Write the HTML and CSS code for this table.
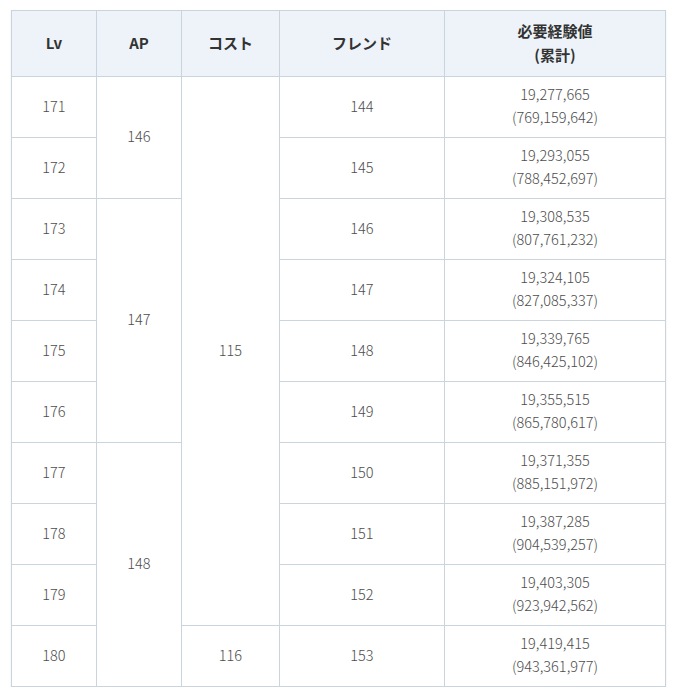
FILE: index.html
```html
<!DOCTYPE html>
<html lang="ja">
<head>
<meta charset="utf-8">
<link rel="stylesheet" href="styles.css">
</head>
<body>
<table class="lv-table">
  <colgroup>
    <col class="c1"><col class="c2"><col class="c3"><col class="c4"><col class="c5">
  </colgroup>
  <thead>
    <tr>
      <th>Lv</th><th>AP</th><th>コスト</th><th>フレンド</th><th>必要経験値<br>(累計)</th>
    </tr>
  </thead>
  <tbody>
    <tr><td>171</td><td rowspan="2">146</td><td rowspan="9">115</td><td>144</td><td>19,277,665<br>(769,159,642)</td></tr>
    <tr><td>172</td><td>145</td><td>19,293,055<br>(788,452,697)</td></tr>
    <tr><td>173</td><td rowspan="4">147</td><td>146</td><td>19,308,535<br>(807,761,232)</td></tr>
    <tr><td>174</td><td>147</td><td>19,324,105<br>(827,085,337)</td></tr>
    <tr><td>175</td><td>148</td><td>19,339,765<br>(846,425,102)</td></tr>
    <tr><td>176</td><td>149</td><td>19,355,515<br>(865,780,617)</td></tr>
    <tr><td>177</td><td rowspan="4">148</td><td>150</td><td>19,371,355<br>(885,151,972)</td></tr>
    <tr><td>178</td><td>151</td><td>19,387,285<br>(904,539,257)</td></tr>
    <tr><td>179</td><td>152</td><td>19,403,305<br>(923,942,562)</td></tr>
    <tr><td>180</td><td>116</td><td>153</td><td>19,419,415<br>(943,361,977)</td></tr>
  </tbody>
</table>
</body>
</html>
```
FILE: styles.css
```css
html, body {
  margin: 0;
  padding: 0;
  background: #ffffff;
}
body {
  padding: 10px 0 0 11px;
  font-family: "Noto Sans CJK JP", "Noto Sans", sans-serif;
}
.lv-table {
  border-collapse: collapse;
  width: 655px;
  table-layout: fixed;
  box-shadow: 0 1px 2px rgba(0, 0, 0, 0.08);
}
.c1 { width: 85px; }
.c2 { width: 85px; }
.c3 { width: 98px; }
.c4 { width: 165px; }
.c5 { width: 221px; }
.lv-table th,
.lv-table td {
  border: 1px solid #c9d4dd;
  text-align: center;
  vertical-align: middle;
  padding: 0 4px;
}
.lv-table th {
  background: #eef3fa;
  color: #333333;
  font-weight: bold;
  font-size: 15px;
  line-height: 24px;
  height: 63px;
  padding-bottom: 2px;
}
.lv-table td {
  color: #4d4d4d;
  font-size: 14.5px;
  font-weight: 300;
  line-height: 23px;
  height: 56px;
  padding-bottom: 4px;
}
```
